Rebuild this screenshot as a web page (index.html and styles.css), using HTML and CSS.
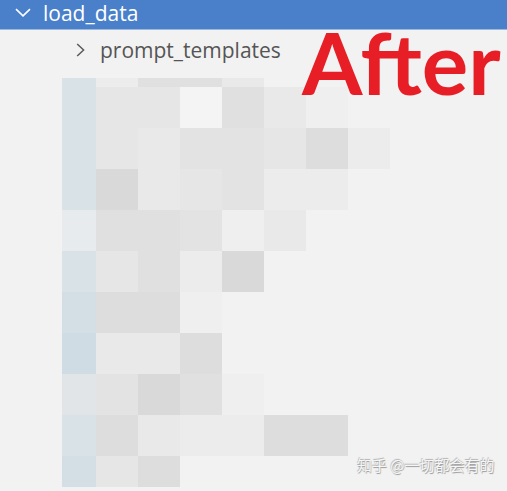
FILE: index.html
```html
<!DOCTYPE html>
<html lang="zh">
<head>
<meta charset="utf-8">
<title>load_data</title>
<link rel="stylesheet" href="styles.css">
</head>
<body>
<div class="tree">
  <div class="row row-open">
    <svg class="chev-down" width="16" height="9" viewBox="0 0 16 9"><path d="M1 1.2 L8 7.8 L15 1.2" fill="none" stroke="#ffffff" stroke-width="1.6"/></svg>
    <span class="label">load_data</span>
  </div>
  <div class="row row-child">
    <svg class="chev-right" width="9" height="14" viewBox="0 0 9 14"><path d="M1.2 1 L7.6 7 L1.2 13" fill="none" stroke="#5a5a5a" stroke-width="1.5"/></svg>
    <span class="label">prompt_templates</span>
  </div>
  <div class="mosaic">
    <i class="b1"></i><i class="k7"></i><i class="k3"></i><i class="k3"></i><i class="k6"></i><i></i><i></i><i></i>
    <i class="b1"></i><i class="k5"></i><i class="k5"></i><i class="k9"></i><i class="k3"></i><i class="k6"></i><i class="k8"></i><i></i>
    <i class="b1"></i><i class="k5"></i><i class="k6"></i><i class="k4"></i><i class="k4"></i><i class="k5"></i><i class="k2"></i><i class="k7"></i>
    <i class="b1"></i><i class="k1"></i><i class="k6"></i><i class="k5"></i><i class="k4"></i><i class="k7"></i><i class="k7"></i><i></i>
    <i class="b4"></i><i class="k3"></i><i class="k3"></i><i class="k4"></i><i class="k8"></i><i class="k6"></i><i></i><i></i>
    <i class="b1"></i><i class="k5"></i><i class="k3"></i><i class="k7"></i><i class="k1"></i><i></i><i></i><i></i>
    <i class="b2"></i><i class="k2"></i><i class="k2"></i><i class="k8"></i><i></i><i></i><i></i><i></i>
    <i class="b3"></i><i class="k6"></i><i class="k6"></i><i class="k2"></i><i></i><i></i><i></i><i></i>
    <i class="b5"></i><i class="k4"></i><i class="k1"></i><i class="k3"></i><i class="k8"></i><i></i><i></i><i></i>
    <i class="b1"></i><i class="k2"></i><i class="k6"></i><i class="k7"></i><i class="k7"></i><i class="k2"></i><i class="k2"></i><i></i>
    <i class="b2"></i><i class="k5"></i><i class="k2"></i><i></i><i></i><i></i><i></i><i></i>
  </div>
</div>
<div class="stamp">After</div>
<div class="watermark">知乎 @一切都会有的</div>
</body>
</html>
```
FILE: styles.css
```css
html, body {
  margin: 0;
  padding: 0;
}
body {
  width: 507px;
  height: 491px;
  overflow: hidden;
  background: #f2f2f2;
  font-family: "Open Sans", "Noto Sans", sans-serif;
  position: relative;
}
.tree {
  display: flex;
  flex-direction: column;
}
.row {
  display: flex;
  align-items: flex-start;
  box-sizing: border-box;
}
.row-open {
  height: 30px;
  background: #4a7fca;
  border-bottom: 1px solid #9db8da;
  padding-left: 15px;
  color: #ffffff;
}
.row-open .label {
  font-size: 21px;
  line-height: 27px;
  margin-left: 12px;
}
.chev-down {
  margin-top: 8px;
}
.row-child {
  height: 40px;
  padding-left: 76px;
  color: #555555;
}
.row-child .label {
  font-size: 21px;
  line-height: 40px;
  margin-left: 15px;
}
.chev-right {
  margin-top: 13px;
}
.mosaic {
  margin-top: 8px;
  margin-left: 62px;
  display: grid;
  grid-template-columns: 34px repeat(7, 42px);
  grid-template-rows: 9px repeat(9, 41px) 31px;
  width: 328px;
}
.mosaic i { display: block; }
.b1 { background: #d9e3e7; }
.b2 { background: #d3dfe5; }
.b3 { background: #cfdce3; }
.b4 { background: #e7ebee; }
.b5 { background: #e2e5e8; }
.k1 { background: #d9d9d9; }
.k2 { background: #dddddd; }
.k3 { background: #e0e0e0; }
.k4 { background: #e3e3e3; }
.k5 { background: #e6e6e6; }
.k6 { background: #e9e9e9; }
.k7 { background: #ececec; }
.k8 { background: #efefef; }
.k9 { background: #f4f4f4; }
.stamp {
  position: absolute;
  left: 302px;
  top: 18px;
  font-family: "Lato", sans-serif;
  font-weight: 700;
  font-size: 87px;
  line-height: 87px;
  color: #e81e27;
}
.watermark {
  position: absolute;
  left: 357px;
  top: 455px;
  font-family: "Noto Sans CJK SC", sans-serif;
  font-size: 15px;
  line-height: 20px;
  color: #f6f6f6;
  text-shadow: 0.6px 0.6px 0.8px #9c9c9c, -0.6px -0.6px 0.8px #b4b4b4;
}
```
